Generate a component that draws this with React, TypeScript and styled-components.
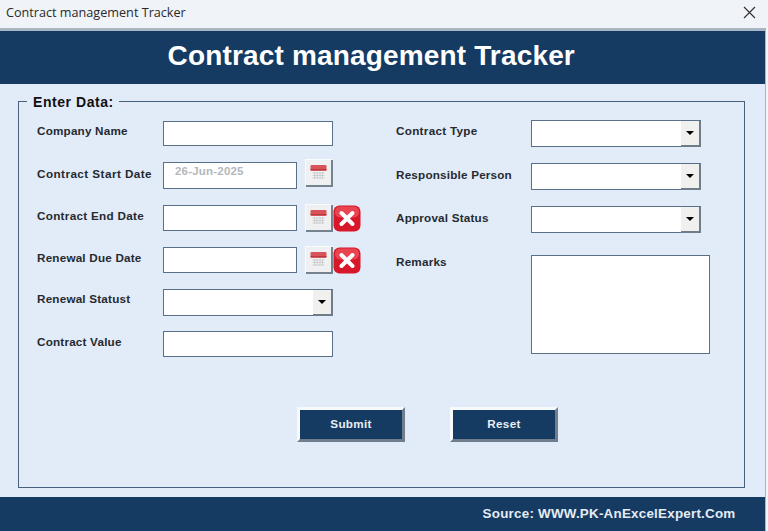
import React from "react";
import styled, { createGlobalStyle } from "styled-components";

const Global = createGlobalStyle`
  html, body { margin: 0; padding: 0; background: #f1f5fa; }
  body { width: 768px; height: 531px; overflow: hidden; font-family: "Liberation Sans", Arial, sans-serif; }
  * { box-sizing: border-box; }
`;

const Windowed = styled.div`
  width: 768px;
  height: 531px;
  display: flex;
  flex-direction: column;
  background: #f1f5fa;
`;
const TitleBar = styled.div`
  height: 28px;
  flex: none;
  display: flex;
  align-items: center;
  justify-content: space-between;
  padding: 0 12px 4px 6px;
  font-family: "Open Sans", "Noto Sans", sans-serif;
  font-size: 12.65px;
  color: #2a2a2a;
  background: #f0f4f9;
`;
const Client = styled.div`
  flex: 1;
  display: flex;
  flex-direction: column;
  width: 765.5px;
  background: #e2ecf8;
  border-top: 3px solid #a9b5c2;
  border-right: 1px solid #a9b5c2;
`;
const Banner = styled.header`
  height: 53px;
  flex: none;
  display: flex;
  align-items: center;
  justify-content: center;
  padding: 0 22px 4px 0;
  background: #153b63;
  color: #fff;
  font-size: 28px;
  font-weight: 700;
  letter-spacing: 0.16px;
`;
const Body = styled.main`
  flex: 1;
  padding: 9px 20px 9px 18px;
  display: flex;
`;
const Group = styled.fieldset`
  flex: 1;
  margin: 0;
  padding: 12px 0 0 18px;
  border: 1px solid #47627e;
  min-width: 0;
`;
const Legend = styled.legend`
  margin-left: -10px;
  padding: 0 5px 0 6px;
  font-size: 14px;
  font-weight: 700;
  color: #111;
  letter-spacing: 0.55px;
  transform: translateY(1px);
`;
const Columns = styled.div`
  display: flex;
  height: 262px;
`;
const Column = styled.div<{ $width: number; $lift?: number }>`
  width: ${(p) => p.$width}px;
  flex: none;
  display: flex;
  flex-direction: column;
  margin-top: ${(p) => -(p.$lift ?? 0)}px;
`;
const Row = styled.div<{ $height: number }>`
  display: flex;
  align-items: flex-start;
  height: ${(p) => p.$height}px;
`;
const Label = styled.label<{ $width: number; $top?: number; $spacing?: number }>`
  width: ${(p) => p.$width}px;
  flex: none;
  padding-top: ${(p) => p.$top ?? 4}px;
  font-size: 11.7px;
  line-height: 13px;
  font-weight: 700;
  color: #262a30;
  letter-spacing: ${(p) => p.$spacing ?? 0.2}px;
  white-space: nowrap;
`;
const Field = styled.div<{ $width: number; $height?: number }>`
  width: ${(p) => p.$width}px;
  height: ${(p) => p.$height ?? 26}px;
  flex: none;
  display: flex;
  justify-content: space-between;
  align-items: stretch;
  background: #fff;
  border: 1px solid #5a7088;
  font-size: 11.5px;
  font-weight: 700;
  color: #b4b7bb;
  letter-spacing: 0.2px;
`;
const DateValue = styled.span`
  padding: 2px 0 0 11px;
`;
const DropButton = styled.div`
  width: 20px;
  flex: none;
  margin: 0 -1px -1px 0;
  display: flex;
  align-items: center;
  justify-content: center;
  background: #f0f0ee;
  border-right: 2px solid #707c88;
  border-bottom: 2px solid #707c88;
`;
const Arrow = styled.span`
  width: 0;
  height: 0;
  border-left: 4px solid transparent;
  border-right: 4px solid transparent;
  border-top: 4px solid #000;
`;
const IconButton = styled.div<{ $lift?: number }>`
  width: 27px;
  height: 27px;
  flex: none;
  margin: ${(p) => -(p.$lift ?? 0)}px 0 0 9px;
  display: flex;
  align-items: center;
  justify-content: center;
  background: #eef0f1;
  border-right: 2px solid #76828e;
  border-bottom: 2px solid #76828e;
  box-shadow: -1px -1px 0 #fafbfc;
`;
const ClearIcon = styled.svg`
  flex: none;
  display: block;
`;
const Actions = styled.div`
  display: flex;
  gap: 45px;
  margin: 24px 0 0 260px;
`;
const ActionButton = styled.button`
  width: 108px;
  height: 35px;
  padding: 0 0 2px;
  background: #153b63;
  color: #e8eef5;
  border: 3px solid;
  border-color: #f7fafd #6f7d8c #6f7d8c #f7fafd;
  font-family: inherit;
  font-size: 11.7px;
  font-weight: 700;
  letter-spacing: 0.3px;
`;
const Footer = styled.footer`
  height: 34px;
  flex: none;
  display: flex;
  align-items: center;
  justify-content: flex-end;
  padding: 0 29px 2px 0;
  background: #153b63;
  color: #e4ebf3;
  font-size: 13.4px;
  font-weight: 700;
  letter-spacing: 0.23px;
`;

const Calendar = ({ lift }: { lift?: number }) => (
  <IconButton $lift={lift}>
    <svg width="17" height="17" viewBox="0 0 17 17" aria-hidden="true">
      <rect x="0.5" y="1" width="16" height="15" rx="1" fill="#f2f2f2" />
      <rect x="0.5" y="1" width="16" height="6" rx="1" fill="#d9545a" />
      <path d="M0.5 5.5h16" stroke="#b33f46" strokeWidth="1" />
      <path d="M2.5 9h12M2.5 11.5h12M2.5 14h12M4.5 8v7M7 8v7M10 8v7M12.5 8v7" stroke="#c5c8ca" strokeWidth="0.8" />
    </svg>
  </IconButton>
);

const Clear = () => (
  <ClearIcon width="28" height="27" viewBox="0 0 28 27" aria-hidden="true">
    <rect x="0.5" y="0.5" width="27" height="26" rx="6" fill="#d8172b" />
    <rect x="2" y="1.5" width="24" height="11" rx="5" fill="#ef5a63" opacity="0.7" />
    <path d="M8.5 8l11 11M19.5 8l-11 11" stroke="#fff" strokeWidth="4" strokeLinecap="round" />
  </ClearIcon>
);

const Drop = () => (
  <DropButton>
    <Arrow />
  </DropButton>
);

export default function App() {
  return (
    <>
      <Global />
      <Windowed>
        <TitleBar>
          <span>Contract management Tracker</span>
          <svg width="13" height="13" viewBox="0 0 13 13" aria-hidden="true">
            <path d="M1 1l11 11M12 1L1 12" stroke="#333" strokeWidth="1.2" />
          </svg>
        </TitleBar>
        <Client>
          <Banner>Contract management Tracker</Banner>
          <Body>
            <Group>
              <Legend>Enter Data:</Legend>
              <Columns>
                <Column $width={359}>
                  <Row $height={41}>
                    <Label $width={126} $top={3}>Company Name</Label>
                    <Field $width={170} $height={25} />
                  </Row>
                  <Row $height={43}>
                    <Label $width={126} $top={5} $spacing={0.45}>Contract Start Date</Label>
                    <Field $width={134} $height={27}>
                      <DateValue>26-Jun-2025</DateValue>
                    </Field>
                    <Calendar lift={2} />
                  </Row>
                  <Row $height={42}>
                    <Label $width={126} $spacing={0.3}>Contract End Date</Label>
                    <Field $width={134} />
                    <Calendar />
                    <Clear />
                  </Row>
                  <Row $height={42}>
                    <Label $width={126}>Renewal Due Date</Label>
                    <Field $width={134} />
                    <Calendar />
                    <Clear />
                  </Row>
                  <Row $height={42}>
                    <Label $width={126} $top={3}>Renewal Statust</Label>
                    <Field $width={170} $height={27}>
                      <span />
                      <Drop />
                    </Field>
                  </Row>
                  <Row $height={42}>
                    <Label $width={126}>Contract Value</Label>
                    <Field $width={170} />
                  </Row>
                </Column>
                <Column $width={320} $lift={1}>
                  <Row $height={43}>
                    <Label $width={135} $top={4} $spacing={0.3}>Contract Type</Label>
                    <Field $width={170} $height={27}>
                      <span />
                      <Drop />
                    </Field>
                  </Row>
                  <Row $height={43}>
                    <Label $width={135} $top={5}>Responsible Person</Label>
                    <Field $width={170} $height={27}>
                      <span />
                      <Drop />
                    </Field>
                  </Row>
                  <Row $height={49}>
                    <Label $width={135} $top={5}>Approval Status</Label>
                    <Field $width={170} $height={27}>
                      <span />
                      <Drop />
                    </Field>
                  </Row>
                  <Row $height={100}>
                    <Label $width={135} $top={0}>Remarks</Label>
                    <Field $width={179} $height={99} />
                  </Row>
                </Column>
              </Columns>
              <Actions>
                <ActionButton>Submit</ActionButton>
                <ActionButton>Reset</ActionButton>
              </Actions>
            </Group>
          </Body>
          <Footer>Source: WWW.PK-AnExcelExpert.Com</Footer>
        </Client>
      </Windowed>
    </>
  );
}
